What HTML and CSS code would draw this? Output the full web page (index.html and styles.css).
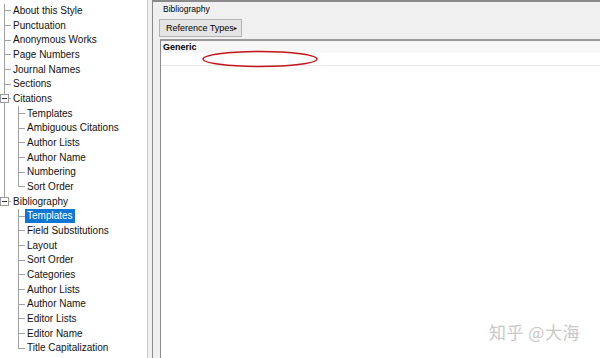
FILE: index.html
```html
<!DOCTYPE html>
<html>

<head>
  <title>Output Style Editor</title>
  <link rel="stylesheet" href="styles.css">
</head>

<body>
  <div class="window">
    <ul class="tree">
      <li class="row"><span class="gut"></span><span class="label">About this Style</span></li>
      <li class="row"><span class="gut"></span><span class="label">Punctuation</span></li>
      <li class="row"><span class="gut"></span><span class="label">Anonymous Works</span></li>
      <li class="row"><span class="gut"></span><span class="label">Page Numbers</span></li>
      <li class="row"><span class="gut"></span><span class="label">Journal Names</span></li>
      <li class="row"><span class="gut"></span><span class="label">Sections</span></li>
      <li class="row"><span class="gut"><span class="box"></span></span><span class="label">Citations</span></li>
      <li class="row sub"><span class="gut"></span><span class="label">Templates</span></li>
      <li class="row sub"><span class="gut"></span><span class="label">Ambiguous Citations</span></li>
      <li class="row sub"><span class="gut"></span><span class="label">Author Lists</span></li>
      <li class="row sub"><span class="gut"></span><span class="label">Author Name</span></li>
      <li class="row sub"><span class="gut"></span><span class="label">Numbering</span></li>
      <li class="row sub end"><span class="gut"></span><span class="label">Sort Order</span></li>
      <li class="row last"><span class="gut"><span class="box"></span></span><span class="label">Bibliography</span></li>
      <li class="row sub tail"><span class="gut"></span><span class="label selected">Templates</span></li>
      <li class="row sub tail"><span class="gut"></span><span class="label">Field Substitutions</span></li>
      <li class="row sub tail"><span class="gut"></span><span class="label">Layout</span></li>
      <li class="row sub tail"><span class="gut"></span><span class="label">Sort Order</span></li>
      <li class="row sub tail"><span class="gut"></span><span class="label">Categories</span></li>
      <li class="row sub tail"><span class="gut"></span><span class="label">Author Lists</span></li>
      <li class="row sub tail"><span class="gut"></span><span class="label">Author Name</span></li>
      <li class="row sub tail"><span class="gut"></span><span class="label">Editor Lists</span></li>
      <li class="row sub tail"><span class="gut"></span><span class="label">Editor Name</span></li>
      <li class="row sub tail end"><span class="gut"></span><span class="label">Title Capitalization</span></li>
    </ul>

    <div class="splitter"></div>

    <div class="pane">
      <div class="pane-title">Bibliography</div>
      <div class="toolbar">
        <button class="menu-btn">Reference Types<span class="arrow">&#9656;</span></button>
      </div>
      <div class="list">
        <div class="list-head">Generic</div>
        <div class="list-row"></div>
      </div>
    </div>
  </div>

  <svg class="mark" width="118" height="20" viewBox="0 0 118 20">
    <ellipse cx="59" cy="10" rx="57" ry="7.5" fill="none" stroke="#c3161c" stroke-width="1.4" />
  </svg>

  <div class="watermark">知乎 @大海</div>
</body>

</html>
```

FILE: styles.css
```css
body {
  margin: 0;
  font-family: 'Liberation Sans', Arial, sans-serif;
  background-color: #ffffff;
  color: #000000;
}

.window {
  display: flex;
  height: 358px;
  overflow: hidden;
}

/* left tree */

.tree {
  list-style: none;
  margin: 0;
  padding: 3.5px 0 0 0;
  width: 147px;
  flex: none;
  border-right: 1px solid #c8c8c8;
  background-color: #ffffff;
  font-size: 10px;
}

.row {
  display: flex;
  align-items: center;
  height: 14.68px;
}

.gut {
  flex: none;
  align-self: stretch;
  width: 11px;
  display: flex;
  align-items: center;
  background:
    linear-gradient(#a0a0a0, #a0a0a0) 4px 0 / 1px 100% no-repeat,
    linear-gradient(#a0a0a0, #a0a0a0) 4px 50% / 7px 1px no-repeat;
}

.row:first-child .gut {
  background:
    linear-gradient(#a0a0a0, #a0a0a0) 4px 0 / 1px 100% no-repeat,
    linear-gradient(#a0a0a0, #a0a0a0) 4px 50% / 7px 1px no-repeat,
    linear-gradient(#a0a0a0, #a0a0a0) 4px -4px / 1px 4px no-repeat;
}

.row.last .gut {
  background:
    linear-gradient(#a0a0a0, #a0a0a0) 4px 0 / 1px 50% no-repeat,
    linear-gradient(#a0a0a0, #a0a0a0) 4px 50% / 7px 1px no-repeat;
}

.row.sub .gut {
  width: 25px;
  background:
    linear-gradient(#a0a0a0, #a0a0a0) 4px 0 / 1px 100% no-repeat,
    linear-gradient(#a0a0a0, #a0a0a0) 18px 0 / 1px 100% no-repeat,
    linear-gradient(#a0a0a0, #a0a0a0) 18px 50% / 7px 1px no-repeat;
}

.row.sub.end .gut {
  background:
    linear-gradient(#a0a0a0, #a0a0a0) 4px 0 / 1px 100% no-repeat,
    linear-gradient(#a0a0a0, #a0a0a0) 18px 0 / 1px 50% no-repeat,
    linear-gradient(#a0a0a0, #a0a0a0) 18px 50% / 7px 1px no-repeat;
}

.row.sub.tail .gut {
  background:
    linear-gradient(#a0a0a0, #a0a0a0) 18px 0 / 1px 100% no-repeat,
    linear-gradient(#a0a0a0, #a0a0a0) 18px 50% / 7px 1px no-repeat;
}

.row.sub.tail.end .gut {
  background:
    linear-gradient(#a0a0a0, #a0a0a0) 18px 0 / 1px 50% no-repeat,
    linear-gradient(#a0a0a0, #a0a0a0) 18px 50% / 7px 1px no-repeat;
}

.box {
  width: 7px;
  height: 7px;
  margin-left: 0;
  border: 1px solid #9a9a9a;
  background:
    linear-gradient(#333333, #333333) 1px 3px / 5px 1px no-repeat,
    #ffffff;
}

.label {
  padding: 0 2px;
  line-height: 14px;
  white-space: nowrap;
  color: #111111;
}

.label.selected {
  background-color: #0f76d4;
  color: #ffffff;
}

/* splitter */

.splitter {
  width: 4px;
  flex: none;
  background-color: #f0f0f0;
}

/* right pane */

.pane {
  flex: 1;
  display: flex;
  flex-direction: column;
  background-color: #f0f0f0;
  border-left: 1px solid #8a8a8a;
  border-top: 2px solid #8a8a8a;
  padding-left: 6px;
}

.pane-title {
  font-size: 8.5px;
  padding: 2px 0 0 4px;
  height: 11px;
}

.toolbar {
  padding: 2px 0 2px 0;
}

.menu-btn {
  font-family: inherit;
  font-size: 9px;
  height: 18px;
  padding: 0 4px 0 6px;
  margin: 0;
  background-color: #e4e4e4;
  border: 1px solid #b4b4b4;
  border-radius: 0;
  color: #000000;
}

.arrow {
  font-size: 6px;
  vertical-align: 1px;
}

.list {
  flex: 1;
  background-color: #ffffff;
  border-left: 1px solid #8a8a8a;
  border-top: 2px solid #9a9a9a;
  margin-left: 1px;
}

.list-head {
  font-size: 9px;
  font-weight: bold;
  height: 12px;
  line-height: 12px;
  padding-left: 2px;
  background-color: #f7f7f7;
}

.list-row {
  height: 12px;
  border-bottom: 1px solid #e8e8e8;
}

/* overlays */

.mark {
  position: absolute;
  left: 201px;
  top: 49px;
}

.watermark {
  position: absolute;
  left: 489px;
  top: 319px;
  font-family: 'Noto Sans CJK SC', sans-serif;
  font-size: 17px;
  color: #c8c8c8;
  letter-spacing: 0.5px;
}
```
